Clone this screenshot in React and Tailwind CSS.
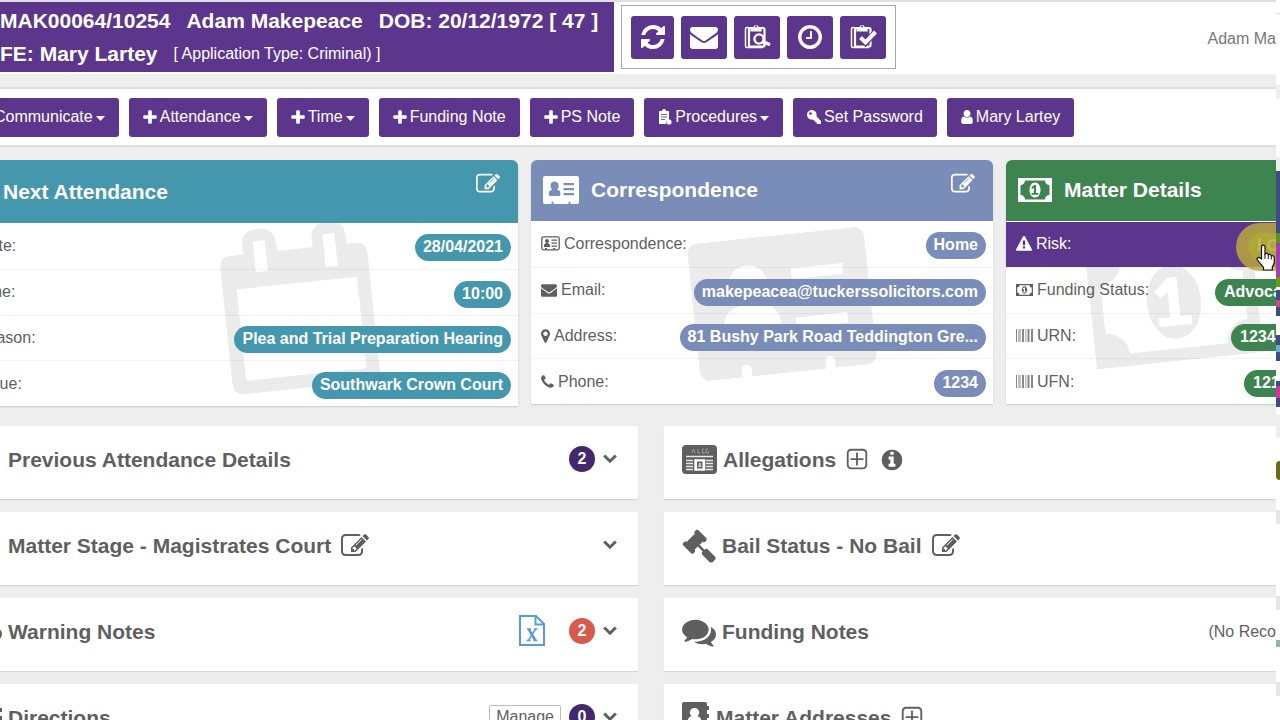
import React from "react";
import { FaKey } from "react-icons/fa";

const PATHS = {
  edit: "M888 1184l116-116-152-152-116 116v56h96v96h56zm440-720q-16-16-33 1l-350 350q-17 17-1 33t33-1l350-350q17-17 1-33zm80 594v190q0 119-84.5 203.5t-203.5 84.5h-832q-119 0-203.5-84.5t-84.5-203.5v-832q0-119 84.5-203.5t203.5-84.5h832q63 0 117 25 15 7 18 23 3 17-9 29l-49 49q-14 14-32 8-23-6-45-6h-832q-66 0-113 47t-47 113v832q0 66 47 113t113 47h832q66 0 113-47t47-113v-126q0-13 9-22l64-64q15-15 35-7t20 29zm-96-738l288 288-672 672h-288v-288zm444 132l-92 92-288-288 92-92q28-28 68-28t68 28l152 152q28 28 28 68t-28 68z",
  refresh: "M1639 1056q0 5-1 7-64 268-268 434.5t-478 166.5q-146 0-282.5-55t-243.5-157l-129 129q-19 19-45 19t-45-19-19-45v-448q0-26 19-45t45-19h448q26 0 45 19t19 45-19 45l-137 137q71 66 161 102t187 36q134 0 250-65t186-179q11-17 53-117 8-23 30-23h192q13 0 22.5 9.5t9.5 22.5zm25-800v448q0 26-19 45t-45 19h-448q-26 0-45-19t-19-45 19-45l138-138q-148-137-349-137-134 0-250 65t-186 179q-11 17-53 117-8 23-30 23h-199q-13 0-22.5-9.5t-9.5-22.5v-7q65-268 270-434.5t480-166.5q146 0 284 55.5t245 156.5l130-129q19-19 45-19t45 19 19 45z",
  envelope: "M1792 710v794q0 66-47 113t-113 47h-1472q-66 0-113-47t-47-113v-794q44 49 101 87 362 246 497 345 57 42 92.5 65.5t94.5 48 110 24.5h2q51 0 110-24.5t94.5-48 92.5-65.5q170-123 498-345 57-39 100-87zm0-294q0 79-49 151t-122 123q-376 261-468 325-10 7-42.5 31t-54 38.5-52 32.5-57.5 27-50 9h-2q-23 0-50-9t-57.5-27-52-32.5-54-38.5-42.5-31q-91-64-262-182.5t-205-142.5q-62-42-117-115.5t-55-136.5q0-78 41.5-130t118.5-52h1472q65 0 112.5 47t47.5 113z",
  clock: "M1024 544v448q0 14-9 23t-23 9h-320q-14 0-23-9t-9-23v-64q0-14 9-23t23-9h224v-352q0-14 9-23t23-9h64q14 0 23 9t9 23zm416 352q0-148-73-273t-198-198-273-73-273 73-198 198-73 273 73 273 198 198 273 73 273-73 198-198 73-273zm224 0q0 209-103 385.5t-279.5 279.5-385.5 103-385.5-103-279.5-279.5-103-385.5 103-385.5 279.5-279.5 385.5-103 385.5 103 279.5 279.5 103 385.5z",
  plus: "M1600 736v192q0 40-28 68t-68 28h-416v416q0 40-28 68t-68 28h-192q-40 0-68-28t-28-68v-416h-416q-40 0-68-28t-28-68v-192q0-40 28-68t68-28h416v-416q0-40 28-68t68-28h192q40 0 68 28t28 68v416h416q40 0 68 28t28 68z",
  plusSquare: "M1344 800v64q0 14-9 23t-23 9h-352v352q0 14-9 23t-23 9h-64q-14 0-23-9t-9-23v-352h-352q-14 0-23-9t-9-23v-64q0-14 9-23t23-9h352v-352q0-14 9-23t23-9h64q14 0 23 9t9 23v352h352q14 0 23 9t9 23zm128 448v-832q0-66-47-113t-113-47h-832q-66 0-113 47t-47 113v832q0 66 47 113t113 47h832q66 0 113-47t47-113zm128-832v832q0 119-84.5 203.5t-203.5 84.5h-832q-119 0-203.5-84.5t-84.5-203.5v-832q0-119 84.5-203.5t203.5-84.5h832q119 0 203.5 84.5t84.5 203.5z",
  info: "M1152 1376v-160q0-14-9-23t-23-9h-96v-512q0-14-9-23t-23-9h-320q-14 0-23 9t-9 23v160q0 14 9 23t23 9h96v320h-96q-14 0-23 9t-9 23v160q0 14 9 23t23 9h448q14 0 23-9t9-23zm-128-896v-160q0-14-9-23t-23-9h-192q-14 0-23 9t-9 23v160q0 14 9 23t23 9h192q14 0 23-9t9-23zm640 416q0 209-103 385.5t-279.5 279.5-385.5 103-385.5-103-279.5-279.5-103-385.5 103-385.5 279.5-279.5 385.5-103 385.5 103 279.5 279.5 103 385.5z",
  user: "M1536 1399q0 109-62.5 187t-150.5 78h-854q-88 0-150.5-78t-62.5-187q0-85 8.5-160.5t31.5-152 58.5-131 94-89 134.5-34.5q131 128 313 128t313-128q76 0 134.5 34.5t94 89 58.5 131 31.5 152 8.5 160.5zm-256-887q0 159-112.5 271.5t-271.5 112.5-271.5-112.5-112.5-271.5 112.5-271.5 271.5-112.5 271.5 112.5 112.5 271.5z",
  marker: "M1152 640q0-106-75-181t-181-75-181 75-75 181 75 181 181 75 181-75 75-181zm256 0q0 109-33 179l-364 774q-16 33-47.5 52t-67.5 19-67.5-19-46.5-52l-365-774q-33-70-33-179 0-212 150-362t362-150 362 150 150 362z",
  phone: "M1600 1240q0 27-10 70.5t-21 68.5q-21 50-122 106-94 51-186 51-27 0-53-3.5t-57.5-12.5-47-14.5-55.5-20.5-49-18q-98-35-175-83-127-79-264-216t-216-264q-48-77-83-175-3-9-18-49t-20.5-55.5-14.5-47-12.5-57.5-3.5-53q0-92 51-186 56-101 106-122 25-11 68.5-21t70.5-10q14 0 21 3 18 6 53 76 11 19 30 54t35 63.5 31 53.5q3 4 17.5 25t21.5 35.5 7 28.5q0 20-28.5 50t-62 55-62 53-28.5 46q0 9 5 22.5t8.5 20.5 14 24 11.5 19q76 137 174 235t235 174q2 1 19 11.5t24 14 20.5 8.5 22.5 5q18 0 46-28.5t53-62 55-62 50-28.5q14 0 28.5 7t35.5 21.5 25 17.5q25 15 53.5 31t63.5 35 54 30q70 35 76 53 3 7 3 21z",
  warning: "M1024 1375v-190q0-14-9.5-23.5t-22.5-9.5h-192q-13 0-22.5 9.5t-9.5 23.5v190q0 14 9.5 23.5t22.5 9.5h192q13 0 22.5-9.5t9.5-23.5zm-2-374l18-459q0-12-10-19-13-11-24-11h-220q-11 0-24 11-10 7-10 21l17 457q0 10 10 16.5t24 6.5h185q14 0 23.5-6.5t10.5-16.5zm-14-934l768 1408q35 63-2 126-17 29-46.5 46t-63.5 17h-1536q-34 0-63.5-17t-46.5-46q-37-63-2-126l768-1408q17-31 47-49t65-18 65 18 47 49z",
  gavel: "M1771 1536q0 53-37 90l-107 108q-39 37-91 37-53 0-90-37l-363-364q-38-36-38-90 0-53 43-96l-256-256-126 126q-14 14-34 14t-34-14q2 2 12.5 12t12.5 13 10 11.5 10 13.5 6 13.5 5.5 16.5 1.5 18q0 38-28 68-3 3-16.5 18t-19 20.5-18.5 16.5-22 15.5-22 9-26 4.5q-40 0-68-28l-408-408q-28-28-28-68 0-13 4.5-26t9-22 15.5-22 16.5-18.5 20.5-19 18-16.5q30-28 68-28 10 0 18 1.5t16.5 5.5 13.5 6 13.5 10 11.5 10 13 12.5 12 12.5q-14-14-14-34t14-34l348-348q14-14 34-14t34 14q-2-2-12.5-12t-12.5-13-10-11.5-10-13.5-6-13.5-5.5-16.5-1.5-18q0-38 28-68 3-3 16.5-18t19-20.5 18.5-16.5 22-15.5 22-9 26-4.5q40 0 68 28l408 408q28 28 28 68 0 13-4.5 26t-9 22-15.5 22-16.5 18.5-20.5 19-18 16.5q-30 28-68 28-10 0-18-1.5t-16.5-5.5-13.5-6-13.5-10-11.5-10-13-12.5-12-12.5q14 14 14 34t-14 34l-126 126 256 256q43-43 96-43 52 0 91 37l363 363q37 39 37 91z",
  comments: "M1408 768q0 139-94 257t-256.5 186.5-353.5 68.5q-86 0-176-16-124 88-278 128-36 9-86 16h-3q-11 0-20.5-8t-11.5-21q-1-3-1-6.5t.5-6.5 2-6l2.5-5 3.5-5.5 4-5 4.5-5 4-4.5q5-6 23-25t26-29.5 22.5-29 25-38.5 20.5-44q-124-72-195-177t-71-224q0-139 94-257t256.5-186.5 353.5-68.5 353.5 68.5 256.5 186.5 94 257zm384 256q0 120-71 224.5t-195 176.5q10 24 20.5 44t25 38.5 22.5 29 26 29.5 23 25q1 1 4 4.5t4.5 5 4 5 3.5 5.5l2.5 5 2 6 .5 6.5-1 6.5q-3 14-13 22t-22 7q-50-7-86-16-154-40-278-128-90 16-176 16-271 0-472-132 58 4 88 4 161 0 309-45t264-129q125-92 192-212t67-254q0-77-23-152 129 71 204 178t75 230z",
};

function Icon({ name, className, viewBox = "0 0 1792 1792" }) {
  return (
    <svg viewBox={viewBox} fill="currentColor" aria-hidden="true" className={`shrink-0 ${className}`}>
      <path d={PATHS[name]} />
    </svg>
  );
}

function PlusIcon() {
  return <Icon name="plus" viewBox="192 96 1408 1472" className="size-3.5" />;
}

function Clipboard({ kind }) {
  return (
    <svg viewBox="0 0 28 28" className="size-7" fill="none" aria-hidden="true">
      <path d="M5.500 4.500H4A1.500 1.500 0 0 0 2.500 6v17A1.500 1.500 0 0 0 4 24.500h16" stroke="currentColor" strokeWidth="1.500" />
      <path d="M6 5h14A1.500 1.500 0 0 1 21.500 6.500V22a1.500 1.500 0 0 1-1.500 1.500H6z" fill="#5c368d" stroke="currentColor" strokeWidth="2.200" />
      <path d="M7.500 8.500V4h3a2.700 2.700 0 0 1 5.200 0h3v4.500z" fill="currentColor" />
      <circle cx="13" cy="3.600" r="1" fill="#5c368d" />
      {kind === "search" ? (
        <>
          <circle cx="16" cy="16" r="4.600" fill="#5c368d" stroke="currentColor" strokeWidth="2.400" />
          <path d="M19.500 19.500H22l5 2.200" stroke="currentColor" strokeWidth="3.400" />
        </>
      ) : (
        <>
          <path d="M12 15.500l4.500 4.500L27 8.500" stroke="#5c368d" strokeWidth="6" />
          <path d="M11.500 14.500l5 5L26.500 9" stroke="currentColor" strokeWidth="4" />
        </>
      )}
    </svg>
  );
}

function ProcedureIcon() {
  return (
    <svg viewBox="0 0 14 16" className="h-4 w-3.5 shrink-0" aria-hidden="true">
      <path d="M1 2h3a2 2 0 0 1 4 0h3v9a3 3 0 0 0-3 4H1z" fill="currentColor" />
      <path d="M3 5.500h6M3 8h6M3 10.500h4" stroke="#5c368d" strokeWidth=".8" />
      <circle cx="11" cy="13" r="2.600" fill="currentColor" />
    </svg>
  );
}

function IdCard({ className }) {
  return (
    <svg viewBox="0 0 36 28" className={className} fill="currentColor" aria-hidden="true">
      <path fillRule="evenodd" d="M2 0h32a2 2 0 0 1 2 2v24a2 2 0 0 1-2 2h-6.500v-1.500a1 1 0 0 0-2 0V28h-15v-1.500a1 1 0 0 0-2 0V28H2a2 2 0 0 1-2-2V2a2 2 0 0 1 2-2zM11.500 5.500c-2.500 0-4 2-4 4.300 0 1.700.7 3 1.800 3.800C7 14 5.800 15.500 5.800 18.200c0 1 .7 1.800 1.700 1.800h8.300c1 0 1.700-.8 1.700-1.800 0-2.700-1.200-4.200-3.600-4.600 1.200-.8 1.800-2.100 1.800-3.800 0-2.300-1.700-4.300-4.200-4.300zM20.500 7v2.200H31V7zm0 5v2.200H31V12zm0 5v2.200H31V17z" />
    </svg>
  );
}

function IdCardOutline() {
  return (
    <svg viewBox="0 0 19 15" className="h-[15px] w-[19px] shrink-0" aria-hidden="true">
      <rect x=".8" y=".8" width="17.4" height="13" rx="1.5" fill="none" stroke="currentColor" strokeWidth="1.300" />
      <circle cx="6" cy="5" r="2" fill="currentColor" />
      <path d="M2.800 11c0-3 1.200-4 3.200-4s3.200 1 3.200 4zM10.500 3.500H16v1.300h-5.500zm0 3H16v1.300h-5.500zm0 3H16v1.300h-5.500zM4 12h2v1.500H4zm8 0h2v1.500h-2z" fill="currentColor" />
    </svg>
  );
}

function Banknote({ className }) {
  return (
    <svg viewBox="0 0 34 24" className={className} fill="currentColor" aria-hidden="true">
      <path fillRule="evenodd" d="M0 0h34v24H0zM7 2.500A4.500 4.500 0 0 1 2.500 7v10A4.500 4.500 0 0 1 7 21.500h20a4.500 4.500 0 0 1 4.500-4.500V7A4.500 4.500 0 0 1 27 2.500z" />
      <path fillRule="evenodd" d="M17 4.500c3.400 0 5.500 3.600 5.500 7.500s-2.100 7.500-5.500 7.500-5.500-3.600-5.500-7.500 2.100-7.500 5.500-7.500zM16.200 7l-3 2.600 1.200 1.400 1.500-1.200V15h-2.300v1.800h6.700V15H18V7z" />
    </svg>
  );
}

function Barcode() {
  return (
    <svg viewBox="0 0 17 13" className="h-[13px] w-[17px] shrink-0" fill="currentColor" aria-hidden="true">
      <path d="M0 0h1v13H0zM6 0h2v13H6zM11.500 0h2v13h-2zM15 0h2v13h-2z" opacity=".75" />
      <path d="M2 0h3v13H2zM9 0h1.500v13H9z" opacity=".4" />
    </svg>
  );
}

function CalendarMark() {
  return (
    <svg viewBox="0 0 162 176" className="h-[176px] w-[162px]" aria-hidden="true">
      <g transform="rotate(-6 81 88)" fill="currentColor">
        <path fillRule="evenodd" d="M18 28h13V20c0-11 6-16 17-16s17 5 17 16v8h36V20c0-11 6-16 17-16s17 5 17 16v8h9q11 0 11 11v117q0 11-11 11H18q-11 0-11-11V39q0-11 11-11zM21 62v90q0 2 2 2h117q2 0 2-2V62zM42 16v31h12V16zm70 0v33h12V16z" />
      </g>
    </svg>
  );
}

function Newspaper() {
  return (
    <svg viewBox="0 0 35 29" className="h-[29px] w-[35px] shrink-0" aria-hidden="true">
      <rect width="35" height="29" rx="4" fill="currentColor" />
      <path d="M10 8l1.500-4L13 8m3-4v4h2.500M22 4h-1.500v4H23m3-4h-2v4h2.500V6" fill="none" stroke="#aaa" strokeWidth=".8" />
      <path d="M4 11.500h27M4 15.500h7M4 18.500h7M4 21.500h7M4 24.500h7M24 15.500h7M24 18.500h7M24 21.500h7M24 24.500h7" stroke="#e8e8e8" strokeWidth="1.500" />
      <path d="M13 15h9.500v10H13z" fill="#fff" stroke="#fff" strokeWidth="1.500" />
      <path d="M15 16.500h5.500v7H15z" fill="currentColor" />
      <path d="M16.800 18h2v2l1 2h-4l1-2z" fill="#ccc" />
    </svg>
  );
}

function AddressBook() {
  return (
    <svg viewBox="0 0 28 31" className="h-[31px] w-7 shrink-0" aria-hidden="true">
      <path d="M2 0h21a2 2 0 0 1 2 2v27a2 2 0 0 1-2 2H2a2 2 0 0 1-2-2V2a2 2 0 0 1 2-2zm23 4h2v4h-2zm0 8h2v4h-2zm0 8h2v4h-2z" fill="currentColor" />
      <path d="M12.500 6a4.500 4.500 0 0 1 3 8q4 1 4 6v2h-14v-2q0-5 4-6a4.500 4.500 0 0 1 3-8z" fill="#fff" />
    </svg>
  );
}

function ExcelFile() {
  return (
    <svg viewBox="0 0 26 31" className="h-[31px] w-[26px]" fill="none" stroke="#5b9bd5" aria-hidden="true">
      <path d="M1 1h16l8 8v21H1zM16.500 1v8.500H25" strokeWidth="2" />
      <path d="M8 14h4M15 14h3.500M7.500 25.500h4M14.500 25.500h4" strokeWidth="1.500" />
      <path d="M9.500 14l7 11.500" strokeWidth="2.500" />
      <path d="M16.500 14l-7 11.500" strokeWidth="1.500" />
    </svg>
  );
}

function Chevron() {
  return (
    <svg viewBox="0 0 14 10" className="h-2.5 w-3.5" fill="none" stroke="currentColor" strokeWidth="3" aria-hidden="true">
      <path d="M1.200 1.500L7 7.200l5.800-5.700" />
    </svg>
  );
}

function Caret() {
  return (
    <svg viewBox="0 0 9 5" className="mt-0.5 h-[5px] w-[9px] shrink-0" fill="currentColor" aria-hidden="true">
      <path d="M0 0h9L4.500 5z" />
    </svg>
  );
}

function ToolButton({ icon, children, caret }) {
  return (
    <button type="button" className="flex h-[39px] shrink-0 items-center gap-[3px] rounded-[3px] bg-[#5c368d] px-3.5 text-base whitespace-nowrap text-white">
      {icon}
      <span>{children}</span>
      {caret && <Caret />}
    </button>
  );
}

function Card({ title, icon, head, pill, mark, rows, tall, edit, clipped }) {
  return (
    <section className={`relative bg-white shadow-[0_1px_2px_rgba(0,0,0,0.15)] ${clipped ? "rounded-tl-md" : "rounded-t-md"}`}>
      <header className={`flex justify-between text-white ${head} ${tall ? "h-[63px]" : "h-[61px] pb-0.5"} ${clipped ? "rounded-tl-md" : "rounded-t-md"}`}>
        <div className="flex items-center gap-3 pl-3">
          {icon}
          <h2 className="text-[21px] leading-6 font-bold whitespace-nowrap">{title}</h2>
        </div>
        {edit && (
          <button type="button" aria-label={`Edit ${title}`} className="mt-3 mr-[18px] h-6">
            <Icon name="edit" className="size-6" />
          </button>
        )}
      </header>
      <div className="relative h-[183px] overflow-hidden">
        {mark}
        <dl className="relative grid h-full grid-rows-4">
          {rows.map((r, i) => (
            <div
              key={r.label}
              className={`flex items-center justify-between ${clipped ? "" : "pr-[7px]"} ${i > 0 ? "border-t border-black/5" : ""} ${r.risk ? "mt-px bg-[#5c368d] text-white" : ""}`}
            >
              <dt className="flex items-center gap-1 pl-2.5 text-base whitespace-nowrap">
                {r.icon}
                {r.label}
              </dt>
              <dd className={`mt-1 h-[27px] overflow-hidden text-base leading-[26px] font-bold whitespace-nowrap text-white ${r.color || pill} ${clipped ? `rounded-l-full pl-[9px] ${r.width}` : "rounded-full px-2"}`}>
                {r.value}
              </dd>
            </div>
          ))}
        </dl>
      </div>
    </section>
  );
}

function Panel({ icon, title, actions, right }) {
  return (
    <section className="flex h-[73px] items-center justify-between bg-white pr-[21px] pl-[18px] shadow-[0_1px_1px_rgba(0,0,0,0.1)]">
      <div className="flex items-center gap-1.5 pb-1.5">
        {icon}
        <h3 className="text-[21px] leading-6 font-bold whitespace-nowrap">{title}</h3>
        {actions}
      </div>
      {right}
    </section>
  );
}

function Count({ value, color }) {
  return <span className={`flex size-[26px] items-center justify-center rounded-full text-base font-bold text-white ${color}`}>{value}</span>;
}

function Toggle({ children, label }) {
  return (
    <div className="flex items-center gap-2 pb-2">
      {children}
      <button type="button" aria-label={`Expand ${label}`} className="flex h-6 items-center">
        <Chevron />
      </button>
    </div>
  );
}

function EditAction({ label }) {
  return (
    <button type="button" aria-label={label} className="ml-1">
      <Icon name="edit" className="size-7" />
    </button>
  );
}

function AddAction({ label }) {
  return (
    <button type="button" aria-label={label} className="ml-0.5">
      <Icon name="plusSquare" className="size-[26px]" />
    </button>
  );
}

const iconButtons = [
  ["Refresh", <Icon name="refresh" className="size-7" />],
  ["Email", <Icon name="envelope" className="size-7" />],
  ["Search records", <Clipboard kind="search" />],
  ["Time", <Icon name="clock" className="size-7" />],
  ["Tasks", <Clipboard kind="check" />],
];

const strip = [
  "h-[13px] bg-white",
  "h-px bg-[#ddd]",
  "h-[71px] bg-white",
  "h-[14px] bg-[#eee]",
  "h-[58px] bg-white",
  "h-[14px] bg-[#eee]",
  "h-[62px] bg-[#3f4c82]",
  "h-[10px] bg-[#5f8f1f]",
  "h-[34px] bg-[#a23fb0]",
  "h-[10px] bg-[#6a9a1a]",
  "h-[3px] bg-white",
  "h-[10px] bg-[#3f4c82]",
  "h-[7px] bg-[#c05080]",
  "h-[9px] bg-[#3f4c82]",
  "h-[19px] bg-white",
  "h-[10px] bg-[#3f4c82]",
  "h-[7px] bg-[#6cb0c8]",
  "h-[9px] bg-[#3f4c82]",
  "h-[20px] bg-white",
  "h-[5px] bg-[#3f4c82]",
  "h-[12px] bg-[#d03a94]",
  "h-[9px] bg-[#3f4c82]",
  "h-[8px] bg-white",
  "h-[23px] bg-[#eee]",
  "h-[23px] bg-white",
  "h-[19px] rounded-l-full bg-[#6b6a1c]",
  "h-[30px] bg-white",
  "h-[14px] bg-[#e6e6e6]",
  "h-[72px] bg-white",
  "h-[14px] bg-[#e6e6e6]",
  "h-[30px] bg-white",
  "h-[7px] bg-[#8fb5b0]",
  "h-[35px] bg-white",
  "h-[14px] bg-[#e6e6e6]",
  "flex-1 bg-white",
];

export default function App() {
  return (
    <div className="flex h-screen overflow-hidden bg-[#eee] font-['Liberation_Sans',Arial,sans-serif] text-[#5f5f61]">
      <main className="min-w-0 flex-1 overflow-hidden">
        <div className="-ml-11">
          <header className="flex h-[74px] items-start gap-[7px] border-t-2 border-[#dedfe3] bg-white">
            <div className="flex h-[70px] w-[658px] shrink-0 flex-col gap-[9px] bg-[#5c368d] pt-[7px] pl-11 text-white">
              <h1 className="flex gap-4 text-[21px] leading-6 font-bold whitespace-nowrap">
                <span>MAK00064/10254</span>
                <span>Adam Makepeace</span>
                <span>DOB: 20/12/1972 [ 47 ]</span>
              </h1>
              <p className="flex items-center gap-4 whitespace-nowrap">
                <strong className="text-[21px] leading-6">FE: Mary Lartey</strong>
                <span className="text-base">[ Application Type: Criminal) ]</span>
              </p>
            </div>
            <div className="mt-[3px] flex h-16 shrink-0 items-center gap-[7px] border border-[#a8a8a8] px-[9px]">
              {iconButtons.map(([label, icon]) => (
                <button key={label} type="button" aria-label={label} className="flex h-[43px] w-[46px] items-center justify-center rounded-[3px] bg-[#5c368d] text-white first:w-[43px]">
                  {icon}
                </button>
              ))}
            </div>
            <span className="ml-auto pt-[25px] text-base whitespace-nowrap text-[#777]">Adam Ma</span>
          </header>

          <nav aria-label="Matter actions" className="mt-[13px] flex h-[60px] items-center gap-2.5 border-y-2 border-[#dedede] bg-white pl-[7px]">
            <ToolButton icon={<PlusIcon />} caret>Communicate</ToolButton>
            <ToolButton icon={<PlusIcon />} caret>Attendance</ToolButton>
            <ToolButton icon={<PlusIcon />} caret>Time</ToolButton>
            <ToolButton icon={<PlusIcon />}>Funding Note</ToolButton>
            <ToolButton icon={<PlusIcon />}>PS Note</ToolButton>
            <ToolButton icon={<ProcedureIcon />} caret>Procedures</ToolButton>
            <ToolButton icon={<FaKey className="size-3.5 shrink-0 -scale-x-100" />}>Set Password</ToolButton>
            <ToolButton icon={<Icon name="user" viewBox="256 128 1280 1536" className="h-3.5 w-3" />}>Mary Lartey</ToolButton>
          </nav>

          <div className="mt-[13px] grid grid-cols-[562fr_462fr_270fr] items-start gap-[13px]">
            <Card
              title="Next Attendance"
              tall
              edit
              head="bg-[#4497ad]"
              pill="bg-[#4497ad]"
              icon={<span className="w-[23px]" />}
              mark={<div className="absolute -top-0.5 left-[262px] text-[#ebebeb]"><CalendarMark /></div>}
              rows={[
                { label: "Date:", value: "28/04/2021", icon: <span className="w-2" /> },
                { label: "Time:", value: "10:00", icon: <span className="w-1.5" /> },
                { label: "Reason:", value: "Plea and Trial Preparation Hearing", icon: <span className="w-1.5" /> },
                { label: "Venue:", value: "Southwark Crown Court", icon: <span className="w-0.5" /> },
              ]}
            />
            <Card
              title="Correspondence"
              edit
              head="bg-[#7a8db9]"
              pill="bg-[#7a8db9]"
              icon={<IdCard className="h-7 w-9 shrink-0" />}
              mark={<div className="absolute top-3.5 left-[158px] -rotate-6 text-[#ebebeb]"><IdCard className="h-[138px] w-[186px]" /></div>}
              rows={[
                { label: "Correspondence:", value: "Home", icon: <IdCardOutline /> },
                { label: "Email:", value: "makepeacea@tuckerssolicitors.com", icon: <Icon name="envelope" className="size-4" /> },
                { label: "Address:", value: "81 Bushy Park Road Teddington Gre...", icon: <Icon name="marker" viewBox="384 0 1024 1792" className="h-4 w-[9px]" /> },
                { label: "Phone:", value: "1234", icon: <Icon name="phone" viewBox="192 0 1408 1792" className="h-4 w-[13px]" /> },
              ]}
            />
            <div className="relative">
              <Card
                title="Matter Details"
                clipped
                head="bg-[#3d8450]"
                pill="bg-[#3d8450]"
                icon={<Banknote className="h-6 w-[34px] shrink-0" />}
                mark={<div className="absolute top-[22px] left-[82px] -rotate-6 text-[#ebebeb]"><Banknote className="h-[118px] w-[172px]" /></div>}
                rows={[
                  { label: "Risk:", value: "LO", risk: true, color: "bg-[#6aa01e]", width: "w-7", icon: <Icon name="warning" className="size-4" /> },
                  { label: "Funding Status:", value: "Advoca", width: "w-[61px]", icon: <Banknote className="h-3 w-[17px] shrink-0" /> },
                  { label: "URN:", value: "12345", width: "w-[45px]", icon: <Barcode /> },
                  { label: "UFN:", value: "121", width: "w-8", icon: <Barcode /> },
                ]}
              />
              <div className="absolute top-[63px] right-0 h-12 w-10 rounded-l-full bg-[#b9a83c]/85" />
              <svg viewBox="0 0 20 27" className="absolute top-[84px] right-0 h-[27px] w-5" aria-hidden="true">
                <path d="M6 1.500c1.500-1 3 0 3 1.500v7c1-1 3-.8 3.300.8 1.200-.8 2.700-.3 3 1 1.500-.6 3 .3 3 2V19l-2 4v3H7.500v-2.500L1.500 16c-1-1.500.5-3.200 2.200-2.200L5.500 15V3z" fill="#fff" stroke="#111" strokeWidth="1.200" />
                <path d="M9 10v5M12.300 11v4M15.300 12v3.500" stroke="#111" strokeWidth="1" />
              </svg>
            </div>
          </div>

          <div className="mt-5 grid grid-cols-[682fr_612fr] gap-x-[26px] gap-y-[13px]">
            <Panel
              icon={<span className="mr-1 h-7 w-6 rounded-r-[2px] border-2 border-[#9fd3e8]" />}
              title="Previous Attendance Details"
              right={<Toggle label="previous attendance"><Count value="2" color="bg-[#43296b]" /></Toggle>}
            />
            <Panel
              icon={<Newspaper />}
              title="Allegations"
              actions={<><AddAction label="Add allegation" /><button type="button" aria-label="Allegation information" className="ml-1"><Icon name="info" className="size-6" /></button></>}
            />
            <Panel
              icon={<span className="mr-0.5 flex h-7 w-[26px] items-center"><span className="h-0.5 w-full bg-[#5a5a5c]" /></span>}
              title="Matter Stage - Magistrates Court"
              actions={<EditAction label="Edit matter stage" />}
              right={<Toggle label="matter stage" />}
            />
            <Panel icon={<Icon name="gavel" className="size-[34px]" />} title="Bail Status - No Bail" actions={<EditAction label="Edit bail status" />} />
            <Panel
              icon={<Icon name="comments" className="size-7" />}
              title="Warning Notes"
              right={
                <Toggle label="warning notes">
                  <button type="button" aria-label="Export to Excel" className="mr-4"><ExcelFile /></button>
                  <Count value="2" color="bg-[#d9594c]" />
                </Toggle>
              }
            />
            <Panel icon={<Icon name="comments" className="size-[34px]" />} title="Funding Notes" right={<span className="-mr-[21px] pb-1.5 text-base whitespace-nowrap">(No Reco</span>} />
            <Panel
              icon={<svg viewBox="0 0 28 24" className="h-6 w-7" fill="currentColor" aria-hidden="true"><path d="M0 2h4v4H0zM7 2h21v4H7zM0 10h4v4H0zM7 10h21v4H7zM0 18h4v4H0zM7 18h21v4H7z" /></svg>}
              title="Directions"
              right={
                <Toggle label="directions">
                  <button type="button" className="h-6 rounded-[2px] border border-[#bbb] px-1.5 text-base leading-5">Manage</button>
                  <Count value="0" color="bg-[#43296b]" />
                </Toggle>
              }
            />
            <Panel icon={<AddressBook />} title="Matter Addresses" actions={<AddAction label="Add matter address" />} />
          </div>
        </div>
      </main>
      <aside aria-hidden="true" className="flex w-1 shrink-0 flex-col overflow-hidden bg-white">
        {strip.map((tone, i) => (
          <div key={i} className={`shrink-0 ${tone}`} />
        ))}
      </aside>
    </div>
  );
}
